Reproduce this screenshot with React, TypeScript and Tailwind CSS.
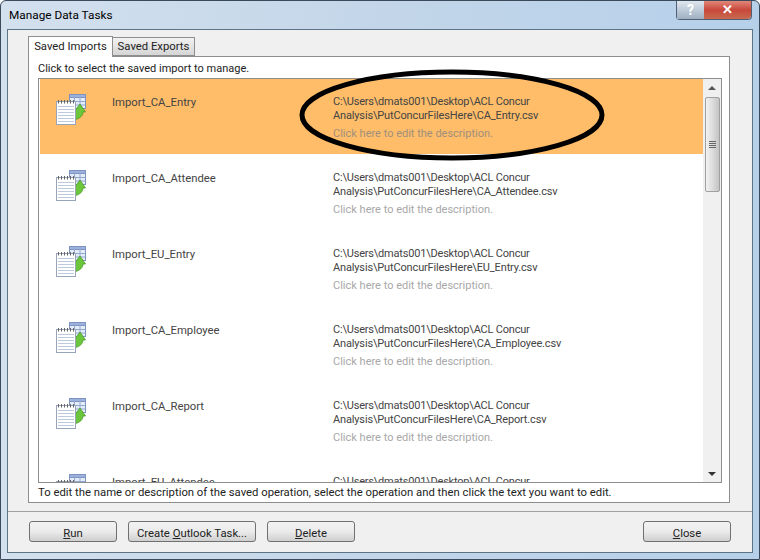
import React from "react";

const font = { fontFamily: 'Roboto, "Noto Sans", sans-serif' };

function TaskIcon() {
  return (
    <svg width="31" height="32" viewBox="0 0 31 32" className="shrink-0">
      <rect x="14.5" y="0.5" width="16" height="14" fill="#e4ecf8" stroke="#7f93c0" />
      <rect x="14.5" y="0.5" width="16" height="3" fill="#9db2de" stroke="#7f93c0" />
      <path d="M19.5 1V14M25 1V14M15 7.5H30M15 11H30" stroke="#93a8d2" strokeWidth="1" />
      <path d="M20.5 25.5 L20.5 18.5 L18.5 18.5 L25 10 L30.5 18 L28 18 C28 21.5 25 24.5 20.5 25.5Z" fill="#6cc63c" stroke="#3f9422" strokeWidth="0.7" />
      <rect x="1.5" y="7.5" width="19" height="23" fill="#ffffff" stroke="#98a5b8" />
      <path d="M3 12.5H19M3 15.5H19M3 18.5H19M3 21.5H19M3 24.5H19M3 27.5H19" stroke="#bdcadd" strokeWidth="1" />
      <path d="M3.5 6V9.5M6.5 6V9.5M9.5 6V9.5M12.5 6V9.5M15.5 6V9.5M18.5 6V9.5" stroke="#666" strokeWidth="1" />
    </svg>
  );
}

const rows = [
  ["Import_CA_Entry", "CA_Entry.csv"],
  ["Import_CA_Attendee", "CA_Attendee.csv"],
  ["Import_EU_Entry", "EU_Entry.csv"],
  ["Import_CA_Employee", "CA_Employee.csv"],
  ["Import_CA_Report", "CA_Report.csv"],
  ["Import_EU_Attendee", "EU_Attendee.csv"],
];

function Row({ name, file, selected }: { name: string; file: string; selected?: boolean }) {
  return (
    <div className="h-[76px] shrink-0 bg-white">
      <div className={`flex h-[75px] ${selected ? "bg-[#ffbd69]" : "bg-white"}`}>
        <div className="w-[72px] shrink-0 pl-[15px] pt-[15px]">
          <TaskIcon />
        </div>
        <div className="w-[221px] shrink-0 pt-[16px] text-[11.3px] text-[#444] leading-[16px]">{name}</div>
        <div className="flex-1 pt-[16px] text-[11px] leading-[14px] text-[#444]">
          <div className="tracking-[-0.2px]">C:\Users\dmats001\Desktop\ACL Concur</div>
          <div className="tracking-[-0.15px]">Analysis\PutConcurFilesHere\{file}</div>
          <div className={`mt-[4px] ${selected ? "text-[#a08f7c]" : "text-[#a8a8a8]"}`}>Click here to edit the description.</div>
        </div>
      </div>
    </div>
  );
}

function Button({ children, className }: { children: React.ReactNode; className: string }) {
  return (
    <button className={`h-[21px] rounded-[3px] border border-[#707070] bg-gradient-to-b from-[#f2f2f2] via-[#ebebeb] to-[#cfcfcf] pt-[3px] text-[#222] text-[11.3px] leading-[18px] ${className}`}>
      {children}
    </button>
  );
}

export default function App() {
  return (
    <div className="relative flex h-[560px] w-[760px] flex-col overflow-hidden rounded-t-[6px] border border-[#3a4a5a] bg-gradient-to-r from-[#d3e0ee] via-[#c3d6e9] to-[#b6d0ea] text-[11px]" style={font}>
      <div className="flex h-[28px] shrink-0 items-start justify-between pl-[8px] pr-[7px]">
        <div className="pt-[6px] text-[11.8px] leading-[17px] text-black">Manage Data Tasks</div>
        <div className="flex h-[19px] rounded-b-[4px] border border-t-0 border-[#4f6075]">
          <div className="flex w-[27px] items-center justify-center bg-gradient-to-b from-[#dfe6ee] to-[#9fb0c2] text-[14px] font-bold text-white">?</div>
          <div className="flex w-[47px] items-center justify-center rounded-br-[4px] bg-gradient-to-b from-[#e0867a] via-[#c9473a] to-[#c66a50] text-[13px] font-bold text-white">✕</div>
        </div>
      </div>

      <div className="mx-[6px] mb-[6px] flex flex-1 flex-col border border-[#5f7387] bg-[#f0f0f0]">
        <div className="flex flex-1 flex-col pl-[20px] pt-[6px]">
          <div className="flex h-[20px] items-end">
            <div className="relative z-10 -mb-px flex h-[21px] w-[85px] items-start justify-center border border-b-0 border-[#8e8e8e] bg-white pt-[2px] text-[11.3px] leading-[16px] text-[#222]">Saved Imports</div>
            <div className="flex h-[19px] w-[82px] items-start justify-center border border-l-0 border-[#8e8e8e] bg-gradient-to-b from-[#f2f2f2] to-[#d5d5d5] pt-[1px] text-[11.3px] leading-[16px] text-[#222]">Saved Exports</div>
          </div>
          <div className="flex h-[447px] w-[702px] flex-col border border-[#8e8e8e] bg-white pl-[9px]">
            <div className="h-[21px] shrink-0 pt-[4px] leading-[16px] text-[#222]">Click to select the saved import to manage.</div>
            <div className="relative flex h-[405px] w-[684px] shrink-0 border border-[#8e8e8e] pl-px">
              <div className="flex flex-1 flex-col overflow-hidden">
                {rows.map((r, i) => (
                  <Row key={r[0]} name={r[0]} file={r[1]} selected={i === 0} />
                ))}
              </div>
              <div className="flex w-[18px] shrink-0 flex-col items-center bg-[#f0f0f0]">
                <div className="flex h-[18px] w-full items-center justify-center">
                  <div className="h-0 w-0 border-x-[4px] border-b-[4px] border-x-transparent border-b-[#555]" />
                </div>
                <div className="flex h-[95px] w-[15px] items-center justify-center rounded-[2px] border border-[#a0a0a0] bg-gradient-to-r from-[#f2f2f2] via-[#dcdcdc] to-[#c4c4c4]">
                  <div className="flex flex-col gap-px">
                    <div className="h-px w-[7px] bg-[#666]" />
                    <div className="h-px w-[7px] bg-[#666]" />
                    <div className="h-px w-[7px] bg-[#666]" />
                    <div className="h-px w-[7px] bg-[#666]" />
                  </div>
                </div>
                <div className="flex-1" />
                <div className="flex h-[17px] w-full items-center justify-center">
                  <div className="h-0 w-0 border-x-[4px] border-t-[4px] border-x-transparent border-t-[#333]" />
                </div>
              </div>
            </div>
            <div className="pt-[2px] text-[11.3px] leading-[16px] text-[#222]">To edit the name or description of the saved operation, select the operation and then click the text you want to edit.</div>
          </div>
        </div>

        <div className="flex h-[41px] shrink-0 items-start justify-between border-t border-[#a0a0a0] pl-[21px] pr-[21px] pt-[9px]">
          <div className="flex gap-[11px]">
            <Button className="w-[88px]"><span className="underline">R</span>un</Button>
            <Button className="w-[128px]">Create <span className="underline">O</span>utlook Task...</Button>
            <Button className="w-[88px]"><span className="underline">D</span>elete</Button>
          </div>
          <Button className="w-[88px]"><span className="underline">C</span>lose</Button>
        </div>
      </div>

      <svg className="pointer-events-none absolute left-[292px] top-[63px]" width="316" height="102" viewBox="0 0 316 102">
        <ellipse cx="159" cy="51" rx="150" ry="43" fill="none" stroke="#000" strokeWidth="5" />
      </svg>
    </div>
  );
}
